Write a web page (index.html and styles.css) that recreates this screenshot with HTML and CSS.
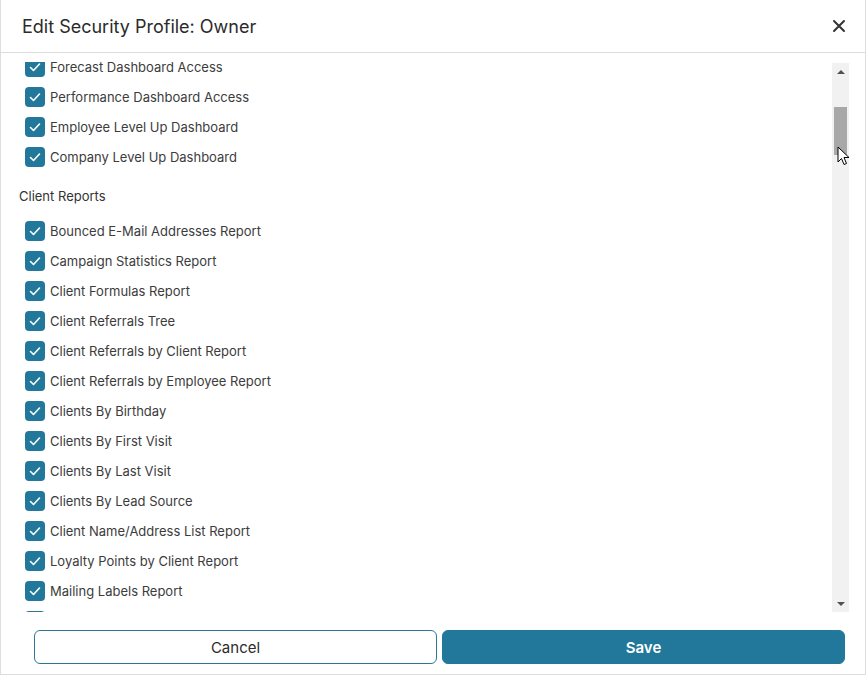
FILE: index.html
```html
<!DOCTYPE html>
<html lang="en">
<head>
    <meta charset="UTF-8">
    <meta name="viewport" content="width=device-width, initial-scale=1.0">
    <title>Edit Security Profile</title>
    <link rel="stylesheet" href="styles.css">
</head>
<body>
    <div class="modal">
        <div class="modal-header">
            <h2>Edit Security Profile: Owner</h2>
            <button class="btn-close" aria-label="Close">
                <svg width="14" height="14" viewBox="0 0 14 14"><path d="M2 2 L12 12 M12 2 L2 12" stroke="#333" stroke-width="2" stroke-linecap="round"/></svg>
            </button>
        </div>

        <div class="modal-body">
            <div class="scroll-area">
                <div class="perm-list">
                    <label class="perm"><span class="check"></span>Forecast Dashboard Access</label>
                    <label class="perm"><span class="check"></span>Performance Dashboard Access</label>
                    <label class="perm"><span class="check"></span>Employee Level Up Dashboard</label>
                    <label class="perm"><span class="check"></span>Company Level Up Dashboard</label>

                    <div class="group-title">Client Reports</div>
                    <label class="perm"><span class="check"></span>Bounced E-Mail Addresses Report</label>
                    <label class="perm"><span class="check"></span>Campaign Statistics Report</label>
                    <label class="perm"><span class="check"></span>Client Formulas Report</label>
                    <label class="perm"><span class="check"></span>Client Referrals Tree</label>
                    <label class="perm"><span class="check"></span>Client Referrals by Client Report</label>
                    <label class="perm"><span class="check"></span>Client Referrals by Employee Report</label>
                    <label class="perm"><span class="check"></span>Clients By Birthday</label>
                    <label class="perm"><span class="check"></span>Clients By First Visit</label>
                    <label class="perm"><span class="check"></span>Clients By Last Visit</label>
                    <label class="perm"><span class="check"></span>Clients By Lead Source</label>
                    <label class="perm"><span class="check"></span>Client Name/Address List Report</label>
                    <label class="perm"><span class="check"></span>Loyalty Points by Client Report</label>
                    <label class="perm"><span class="check"></span>Mailing Labels Report</label>
                    <label class="perm"><span class="check"></span>Mailing List Report</label>
                </div>
            </div>
            <div class="scrollbar">
                <span class="arrow arrow-up"></span>
                <div class="track">
                    <div class="thumb"></div>
                </div>
                <span class="arrow arrow-down"></span>
            </div>
            <svg class="cursor" width="14" height="21" viewBox="0 0 14 21"><path d="M1 1 L1 16 L4.5 12.5 L7 18.5 L9.5 17.5 L7 11.5 L12 11.5 Z" fill="#fff" stroke="#000" stroke-width="1" stroke-linejoin="round"/></svg>
        </div>

        <div class="modal-footer">
            <button class="btn btn-cancel">Cancel</button>
            <button class="btn btn-save">Save</button>
        </div>
    </div>
</body>
</html>
```
FILE: styles.css
```css
body {
    margin: 0;
    font-family: 'Inter', 'Noto Sans', sans-serif;
    background: #fff;
    color: #333;
}
.modal {
    width: 866px;
    height: 675px;
    box-sizing: border-box;
    border: 1px solid #dedede;
    border-top: none;
    display: flex;
    flex-direction: column;
    background: #fff;
}
.modal-header {
    height: 53px;
    box-sizing: border-box;
    border-bottom: 1px solid #dcdcdc;
    display: flex;
    align-items: center;
    justify-content: space-between;
    padding: 0 19px 0 21px;
}
.modal-header h2 {
    margin: 0;
    font-size: 18px;
    font-weight: 400;
    color: #2b2b2b;
}
.btn-close {
    background: none;
    border: none;
    padding: 0;
    width: 14px;
    height: 14px;
    cursor: pointer;
    display: flex;
}
.modal-body {
    position: relative;
    display: flex;
    align-items: flex-start;
    padding: 9px 16px 0 18px;
}
.scroll-area {
    flex: 1;
    height: 550px;
    overflow: hidden;
}
.perm-list {
    margin-top: -10px;
}
.perm {
    display: flex;
    align-items: center;
    height: 30px;
    padding-left: 6px;
    font-size: 13px;
    color: #3c3c3c;
}
.check {
    width: 20px;
    height: 20px;
    border-radius: 4px;
    background: #22789a;
    margin-right: 5px;
    flex-shrink: 0;
    background-image: url("data:image/svg+xml,%3Csvg xmlns='http://www.w3.org/2000/svg' width='20' height='20' viewBox='0 0 20 20'%3E%3Cpath d='M5.5 10.5 L8.5 13.5 L14.5 7' fill='none' stroke='%23fff' stroke-width='1.6' stroke-linecap='round' stroke-linejoin='round'/%3E%3C/svg%3E");
}
.group-title {
    font-size: 13px;
    color: #333;
    line-height: 20px;
    margin: 14px 0 10px 0;
}
.scrollbar {
    width: 17px;
    height: 549px;
    margin-top: 1px;
    background: #f1f1f1;
    display: flex;
    flex-direction: column;
    align-items: center;
}
.arrow {
    height: 17px;
    width: 17px;
    display: flex;
    align-items: center;
    justify-content: center;
}
.arrow::before {
    content: '';
    border-left: 4px solid transparent;
    border-right: 4px solid transparent;
}
.arrow-up::before {
    border-bottom: 4px solid #505050;
}
.arrow-down::before {
    border-top: 4px solid #505050;
}
.track {
    flex: 1;
    width: 100%;
    display: flex;
    justify-content: center;
}
.thumb {
    width: 13px;
    height: 48px;
    margin-top: 27px;
    background: #a8a8a8;
}
.cursor {
    position: absolute;
    left: 836px;
    top: 93px;
}
.modal-footer {
    display: flex;
    gap: 5px;
    padding: 18px 20px 0 33px;
}
.btn {
    flex: 1;
    height: 34px;
    border-radius: 6px;
    font-family: 'Inter', 'Noto Sans', sans-serif;
    font-size: 15px;
    cursor: pointer;
}
.btn-cancel {
    background: #fff;
    color: #2b2b2b;
    border: 1px solid #2a7896;
}
.btn-save {
    background: #22789a;
    color: #fff;
    border: 1px solid #22789a;
    font-weight: 600;
}
```
